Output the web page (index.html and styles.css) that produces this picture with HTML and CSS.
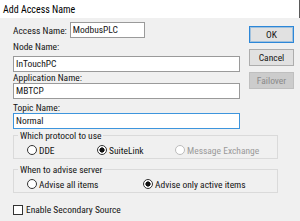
FILE: index.html
```html
<!DOCTYPE html>
<html>
<head>
<meta charset="utf-8">
<link rel="stylesheet" href="styles.css">
</head>
<body>
<div class="window">
  <div class="titlebar">Add Access Name</div>
  <div class="content">
    <div class="top">
      <div class="form">
        <div class="access-row">
          <span class="label">Access Name:</span>
          <div class="field short">ModbusPLC</div>
        </div>
        <div class="label node-label">Node Name:</div>
        <div class="field node-field">InTouchPC</div>
        <div class="label app-label">Application Name:</div>
        <div class="field">MBTCP</div>
        <div class="label topic-label">Topic Name:</div>
        <div class="field focused">Normal</div>
      </div>
      <div class="buttons">
        <div class="btn default">OK</div>
        <div class="btn">Cancel</div>
        <div class="btn disabled">Failover</div>
      </div>
    </div>
    <fieldset class="group protocol">
      <legend>Which protocol to use</legend>
      <div class="radios protocol-radios">
        <div class="radio-item"><span class="radio"></span>DDE</div>
        <div class="radio-item"><span class="radio checked"></span>SuiteLink</div>
        <div class="radio-item off"><span class="radio"></span>Message Exchange</div>
      </div>
    </fieldset>
    <fieldset class="group advise">
      <legend>When to advise server</legend>
      <div class="radios advise-radios">
        <div class="radio-item"><span class="radio"></span>Advise all items</div>
        <div class="radio-item"><span class="radio checked"></span>Advise only active items</div>
      </div>
    </fieldset>
    <div class="check-row"><span class="checkbox"></span>Enable Secondary Source</div>
  </div>
</div>
</body>
</html>
```

FILE: styles.css
```css
html, body {
  margin: 0;
  padding: 0;
}

.window {
  width: 300px;
  height: 221px;
  overflow: hidden;
  background: #f0f0f0;
  color: #141414;
  font-family: "Roboto Condensed", "Liberation Sans Narrow", "DejaVu Sans Condensed", "Liberation Sans", sans-serif;
  font-size: 9.5px;
  line-height: 11px;
}

.titlebar {
  height: 18px;
  box-sizing: border-box;
  background: #fff;
  border-right: 1px solid #5a5a5a;
  padding: 1px 0 0 3px;
  font-size: 10px;
  line-height: 17px;
  color: #000;
}

.content {
  padding: 4px 6px 0 13px;
}

.top {
  display: flex;
  gap: 9px;
}

.form {
  width: 227px;
  display: flex;
  flex-direction: column;
}

.access-row {
  display: flex;
  align-items: center;
  gap: 3px;
  height: 16px;
}

.label {
  line-height: 11px;
  white-space: nowrap;
}

.node-label { margin-top: 3px; }
.node-field { margin-top: 4px; }
.topic-label { margin-top: 3px; }

.field {
  height: 16px;
  box-sizing: border-box;
  border: 1px solid #9a9a9a;
  background: #fff;
  padding: 0 2px;
  line-height: 14px;
  white-space: nowrap;
}

.field.short {
  width: 75px;
}

.field.focused {
  border-color: #3d95dd;
}

.buttons {
  width: 45px;
  margin-top: 4px;
  display: flex;
  flex-direction: column;
  gap: 6px;
}

.btn {
  height: 17px;
  box-sizing: border-box;
  border: 1px solid #adadad;
  background: #e1e1e1;
  text-align: center;
  line-height: 15px;
}

.btn.default {
  border-color: #2c87d8;
  box-shadow: inset 0 0 0 1px rgba(44, 135, 216, 0.35);
}

.btn.disabled {
  background: #cccccc;
  border-color: #bfbfbf;
  color: #8a8a8a;
}

.group {
  width: 265px;
  box-sizing: border-box;
  margin: 1px 0 0;
  padding: 3px 0 2px 4px;
  border: 1px solid #dadada;
  min-inline-size: 0;
}

.group.advise {
  margin-top: 5px;
}

.group legend {
  padding: 0 2px;
  line-height: 11px;
}

.radios {
  display: grid;
  height: 12px;
  align-items: center;
  margin-left: 9px;
}

.protocol-radios {
  grid-template-columns: 70px 78px auto;
}

.advise-radios {
  grid-template-columns: 116px auto;
}

.radio-item {
  display: flex;
  align-items: center;
  gap: 2px;
  white-space: nowrap;
}

.radio {
  width: 10px;
  height: 10px;
  box-sizing: border-box;
  border: 1px solid #333;
  border-radius: 50%;
  background: #fff;
}

.radio.checked {
  background: radial-gradient(circle, #111 0 2.3px, #fff 2.9px);
}

.radio-item.off {
  color: #9a9a9a;
}

.radio-item.off .radio {
  border-color: #bcbcbc;
}

.check-row {
  margin-top: 12px;
  display: flex;
  align-items: flex-start;
  gap: 3px;
  line-height: 10px;
  white-space: nowrap;
}

.checkbox {
  width: 10px;
  height: 10px;
  box-sizing: border-box;
  border: 1px solid #333;
  background: #fff;
}
```
